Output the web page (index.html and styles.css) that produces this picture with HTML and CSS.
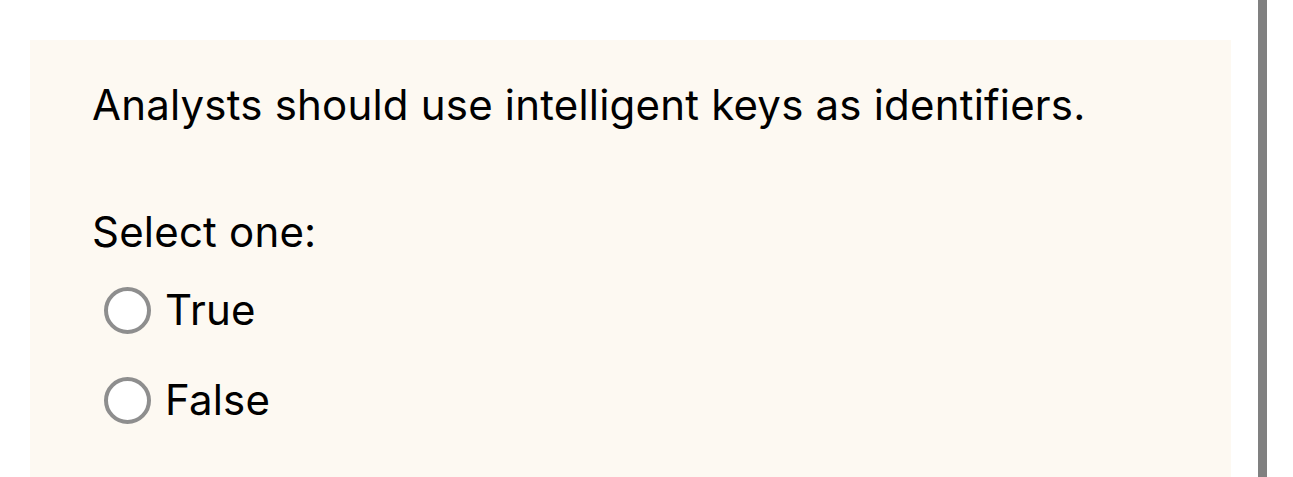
FILE: index.html
```html
<!DOCTYPE html>
<html lang="en">
<head>
<meta charset="utf-8">
<title>Question</title>
<link rel="stylesheet" href="styles.css">
</head>
<body>
<div class="page">
  <div class="panel">
    <p class="question">Analysts should use intelligent keys as identifiers.</p>
    <p class="prompt">Select one:</p>
    <div class="options">
      <label class="option"><span class="radio"></span><span class="label">True</span></label>
      <label class="option"><span class="radio"></span><span class="label">False</span></label>
    </div>
  </div>
  <div class="bar"></div>
</div>
</body>
</html>
```

FILE: styles.css
```css
html, body {
  margin: 0;
  padding: 0;
  background: #ffffff;
}

.page {
  display: flex;
  height: 477px;
  overflow: hidden;
  font-family: Inter, "Liberation Sans", Arial, sans-serif;
  color: #000;
  letter-spacing: 0.2px;
}

.panel {
  flex: none;
  width: 1201px;
  margin: 40px 0 0 30px;
  padding: 40px 0 0 62px;
  box-sizing: border-box;
  background: #fdf9f2;
}

.question,
.prompt {
  margin: 0;
  font-size: 42px;
  line-height: 50px;
}

.prompt {
  margin-top: 77px;
}

.options {
  display: flex;
  flex-direction: column;
  gap: 40px;
  margin-top: 28px;
}

.option {
  display: flex;
  align-items: center;
  height: 50px;
}

.radio {
  flex: none;
  width: 47px;
  height: 47px;
  box-sizing: border-box;
  border: 4px solid #8e8e8e;
  border-radius: 50%;
  background: #fff;
  margin-left: 12px;
}

.label {
  font-size: 42px;
  line-height: 50px;
  margin-left: 14px;
}

.bar {
  flex: none;
  width: 9px;
  margin-left: 27px;
  background: #808080;
}
```
